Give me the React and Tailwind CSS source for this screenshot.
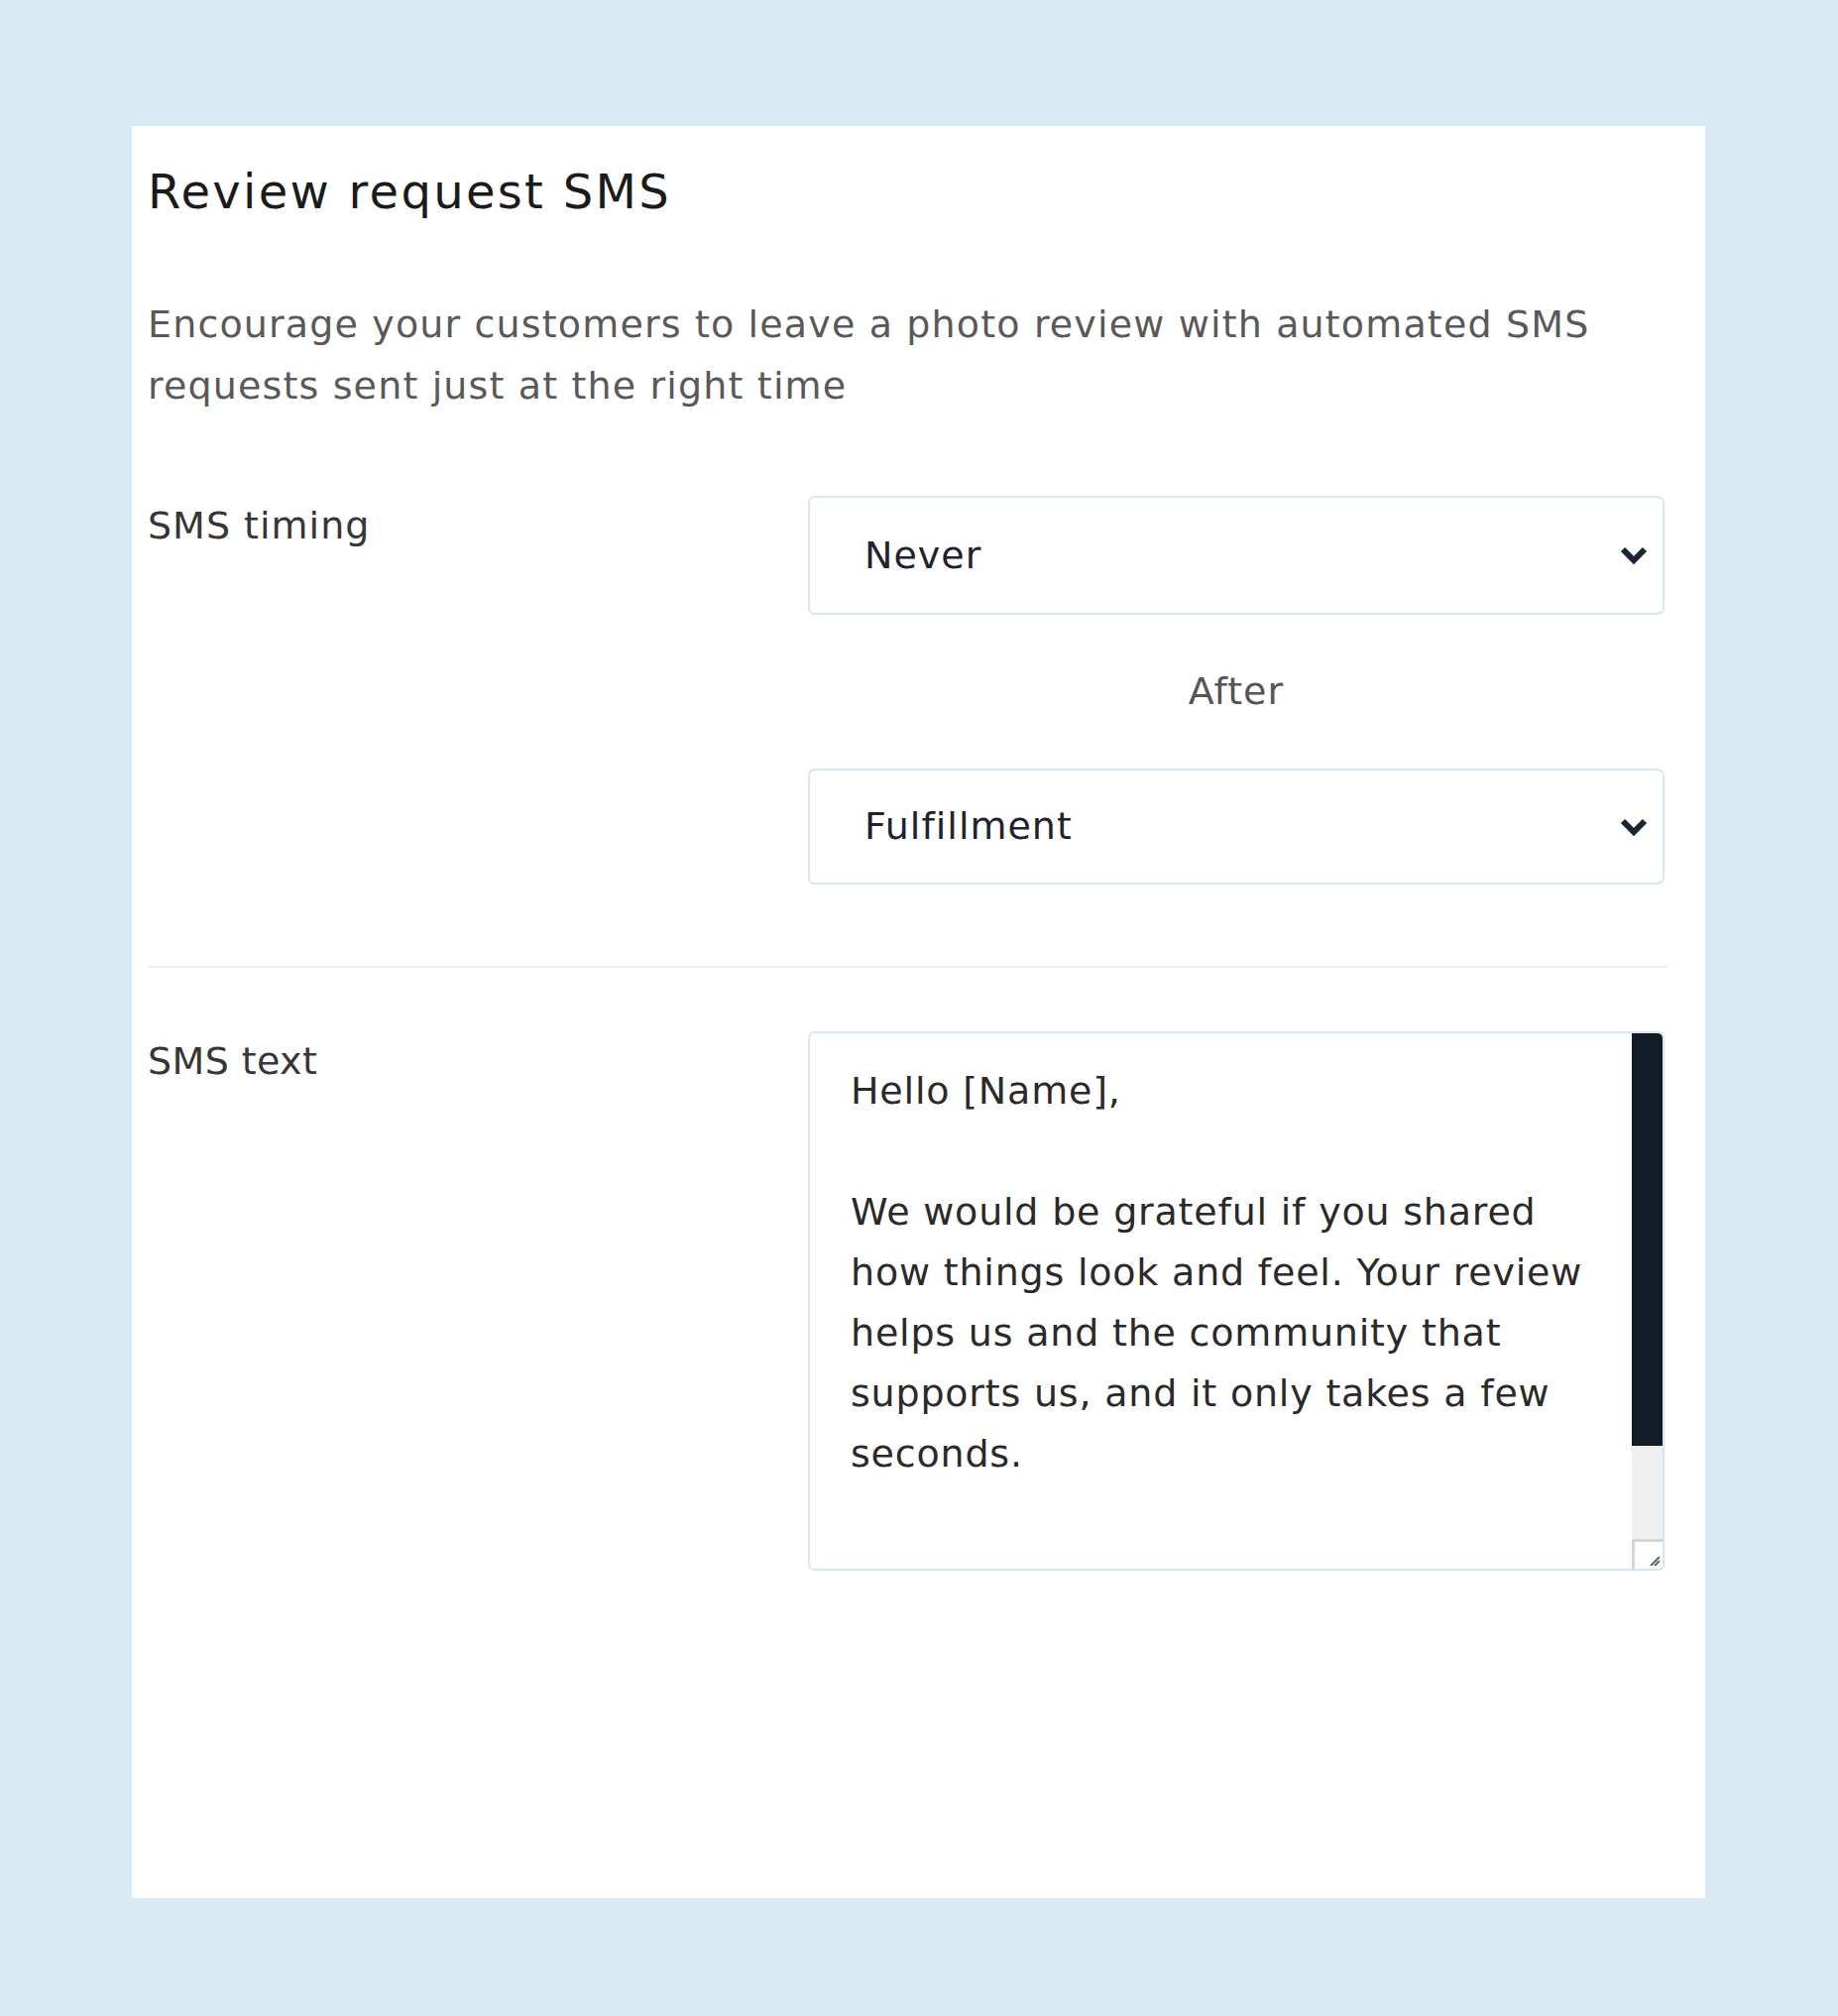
import React, { useState } from "react";

const Chevron = () => (
  <svg
    className="pointer-events-none absolute right-[16px] top-1/2 -translate-y-1/2"
    width="30"
    height="18"
    viewBox="0 0 30 18"
    fill="none"
  >
    <polyline
      points="4,3 15,14 26,3"
      stroke="#1c2430"
      strokeWidth="6"
      strokeLinejoin="miter"
    />
  </svg>
);

const SelectBox = ({ value, onChange, options, height }) => (
  <div className="relative w-[864px]">
    <select
      value={value}
      onChange={(e) => onChange(e.target.value)}
      className={`block w-full ${height} appearance-none rounded-[7px] border-2 border-[#d6e7f2] bg-white pl-[55px] pr-[60px] text-[38px] tracking-[1px] text-[#22222e] outline-none`}
    >
      {options.map((o) => (
        <option key={o}>{o}</option>
      ))}
    </select>
    <Chevron />
  </div>
);

// scrollbar drawn next to the textarea (headless browser hides real ones)
const ScrollBar = () => (
  <div className="flex w-[31px] flex-col">
    <div className="h-[416px] bg-[#121c26]" />
    <div className="flex-1 bg-[#f0f0f0]" />
    <div className="relative h-[30px] border-l-[3px] border-t-[3px] border-[#d6d6d6] bg-white">
      <svg className="absolute right-[2px] bottom-[3px]" width="12" height="10" viewBox="0 0 12 10">
        <path d="M11 1 L2 10 M11 5 L6 10" stroke="#666666" strokeWidth="2" />
      </svg>
    </div>
  </div>
);

const App = () => {
  const [timing, setTiming] = useState("Never");
  const [event, setEvent] = useState("Fulfillment");

  const smsText =
    "Hello [Name],\n\nWe would be grateful if you shared how things look and feel. Your review helps us and the community that supports us, and it only takes a few seconds.";

  return (
    <div className="min-h-[2033px] bg-[#d9eaf4] pl-[133px] pr-[134px] pt-[127px] pb-[119px] font-['DejaVu_Sans',sans-serif]">
      <div className="h-[1787px] bg-white pl-4 pr-[39px] pt-[37px]">
        <h1 className="text-[48px] leading-[58px] tracking-[2.3px] text-[#1b1b1b]">
          Review request SMS
        </h1>
        <p className="mt-[74px] text-[38px] leading-[62px] tracking-[1.15px] text-[#595959]">
          Encourage your customers to leave a photo review with automated SMS
          requests sent just at the right time
        </p>

        {/* timing */}
        <div className="mt-[80px] flex border-b-2 border-[#e9edf1] pb-[82px]">
          <div className="w-[666px] text-[38px] leading-[61px] tracking-[1px] text-[#363636]">
            SMS timing
          </div>
          <div className="flex flex-col">
            <SelectBox
              value={timing}
              onChange={setTiming}
              options={["Never", "1 day", "3 days", "7 days", "14 days"]}
              height="h-[120px]"
            />
            <div className="py-[47px] text-center text-[38px] leading-[61px] tracking-[1px] text-[#555555]">
              After
            </div>
            <SelectBox
              value={event}
              onChange={setEvent}
              options={["Fulfillment", "Delivery"]}
              height="h-[117px]"
            />
          </div>
        </div>

        {/* text */}
        <div className="flex pt-[64px]">
          <div className="w-[666px] text-[38px] leading-[61px] tracking-[0.4px] text-[#363636]">
            SMS text
          </div>
          <div className="flex h-[544px] w-[864px] overflow-hidden rounded-[7px] border-2 border-[#d6e7f2] bg-white">
            <textarea
              defaultValue={smsText}
              className="block h-full min-w-0 flex-1 resize-none overflow-hidden bg-white pl-[41px] pr-[20px] pt-[28px] pb-[24px] text-[38px] leading-[61px] tracking-[0.8px] text-[#2a2a2a] outline-none"
            />
            <ScrollBar />
          </div>
        </div>
      </div>
    </div>
  );
};

export default App;
